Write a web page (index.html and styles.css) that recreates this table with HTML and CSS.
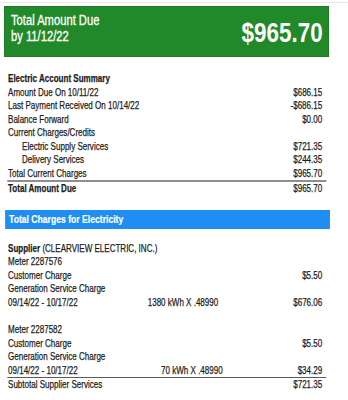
FILE: index.html
```html
<!DOCTYPE html>
<html>
<head>
<meta charset="utf-8">
<link rel="stylesheet" href="styles.css">
</head>
<body>
<div class="page">
  <div class="due-box">
    <div class="due-label">Total Amount Due<br>by 11/12/22</div>
    <div class="due-amount">$965.70</div>
  </div>

  <div class="narrow">
    <div class="summary">
      <div class="row head"><span>Electric Account Summary</span></div>
      <div class="row"><span>Amount Due On 10/11/22</span><span class="amt">$686.15</span></div>
      <div class="row"><span>Last Payment Received On 10/14/22</span><span class="amt">-$686.15</span></div>
      <div class="row"><span>Balance Forward</span><span class="amt">$0.00</span></div>
      <div class="row"><span>Current Charges/Credits</span></div>
      <div class="row indent"><span>Electric Supply Services</span><span class="amt">$721.35</span></div>
      <div class="row indent"><span>Delivery Services</span><span class="amt">$244.35</span></div>
      <div class="row"><span>Total Current Charges</span><span class="amt">$965.70</span></div>
      <div class="row total"><span>Total Amount Due</span><span class="amt">$965.70</span></div>
    </div>

    <div class="bar">Total Charges for Electricity</div>

    <div class="charges">
      <div class="row"><span><b>Supplier</b> (CLEARVIEW ELECTRIC, INC.)</span></div>
      <div class="row"><span>Meter 2287576</span></div>
      <div class="row"><span>Customer Charge</span><span class="amt">$5.50</span></div>
      <div class="row"><span>Generation Service Charge</span></div>
      <div class="row three"><span>09/14/22 - 10/17/22</span><span class="mid">1380 kWh X .48990</span><span class="amt">$676.06</span></div>
      <div class="row gap"><span>Meter 2287582</span></div>
      <div class="row"><span>Customer Charge</span><span class="amt">$5.50</span></div>
      <div class="row"><span>Generation Service Charge</span></div>
      <div class="row three"><span>09/14/22 - 10/17/22</span><span class="mid">70 kWh X .48990</span><span class="amt">$34.29</span></div>
      <div class="row subtotal"><span>Subtotal Supplier Services</span><span class="amt">$721.35</span></div>
    </div>
  </div>
</div>
</body>
</html>
```

FILE: styles.css
```css
html, body {
  margin: 0;
  padding: 0;
  background: #fff;
}
body {
  font-family: "Liberation Sans", Arial, sans-serif;
  color: #1c1c1c;
}
.page {
  width: 348px;
  height: 400px;
  margin-top: 2px;
  border-top: 1px solid #e8e8e8;
  box-sizing: border-box;
  padding-top: 3px;
  overflow: hidden;
}
.due-box {
  margin-left: 4px;
  width: 325px;
  height: 51px;
  box-sizing: border-box;
  background: #22892a;
  border: 1px solid #1d7d24;
  color: #fff;
  display: flex;
  align-items: flex-start;
  justify-content: space-between;
  padding: 0 5px 0 6px;
}
.due-label {
  margin-top: 5px;
  font-size: 14px;
  line-height: 16px;
  white-space: nowrap;
  -webkit-text-stroke: 0.3px #fff;
  transform: scaleX(0.8);
  transform-origin: left top;
}
.due-amount {
  margin-top: 11px;
  font-size: 27px;
  line-height: 30px;
  font-weight: 700;
  transform: scaleX(0.83);
  transform-origin: right top;
}

/* condensed body text */
.narrow {
  width: 477px;
  font-size: 11px;
  -webkit-text-stroke: 0.25px #1c1c1c;
  transform: scaleX(0.73);
  transform-origin: left top;
}
.summary {
  margin: 15px 35.6px 0 11px;
}
.row {
  display: flex;
  justify-content: space-between;
  height: 13.5px;
  line-height: 13.5px;
  white-space: nowrap;
}
.head {
  font-weight: 700;
}
.indent {
  padding-left: 19.2px;
}
.total {
  font-weight: 700;
  border-top: 2px solid #8e8e8e;
  margin-left: -1.4px;
  margin-right: -5.5px;
  padding-left: 1.4px;
  padding-right: 5.5px;
  height: 13px;
  line-height: 13px;
}
.total .amt {
  font-weight: 400;
}
.bar {
  margin: 15px 24.6px 0 6.85px;
  background: #1f8ef2;
  color: #fff;
  -webkit-text-stroke: 0.2px #fff;
  font-weight: 700;
  font-size: 11.8px;
  height: 19px;
  line-height: 19px;
  padding-left: 5.5px;
}
.charges {
  margin: 12.5px 35.6px 0 11px;
}
.three .mid {
  margin-left: auto;
  margin-right: 102.7px;
}
.gap {
  margin-top: 14px;
}
.subtotal {
  border-top: 1px solid #5a5a5a;
  margin-left: -1.4px;
  margin-right: -5.5px;
  padding-left: 1.4px;
  padding-right: 5.5px;
}
```
